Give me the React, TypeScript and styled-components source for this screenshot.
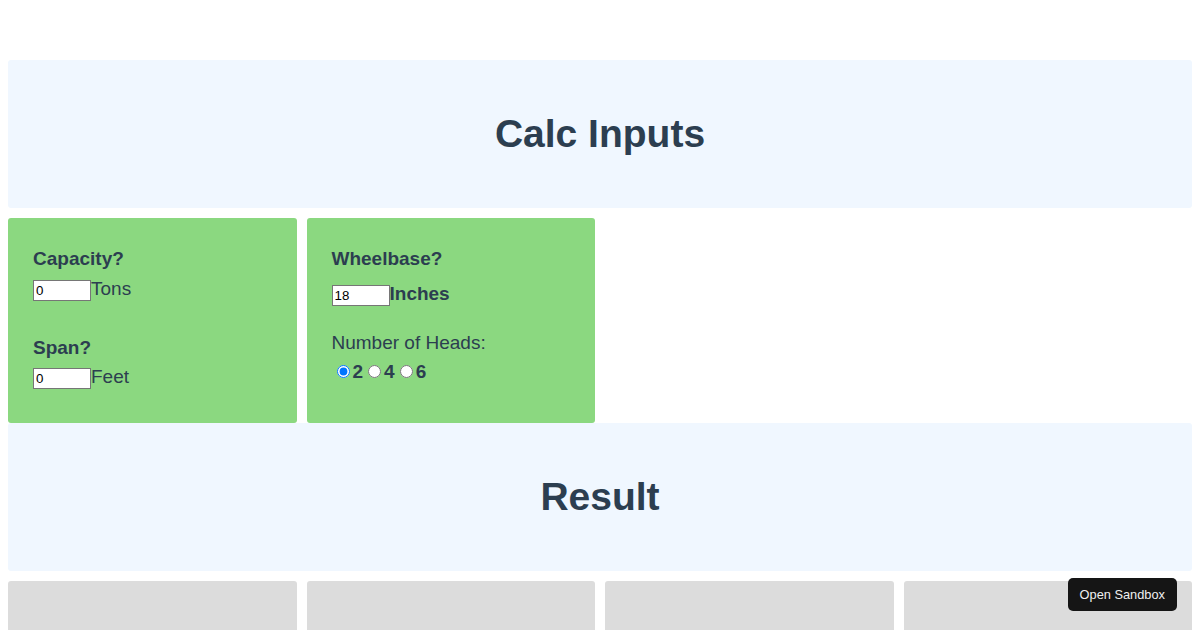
import React, { useState } from 'react';
import styled, { createGlobalStyle } from 'styled-components';

const GlobalStyle = createGlobalStyle`
  body {
    margin: 8px;
    font-family: "Liberation Sans", Arial, Helvetica, sans-serif;
    color: #2c3e50;
    background: #ffffff;
  }
`;

const App = () => {
  const [capacity, setCapacity] = useState('0');
  const [span, setSpan] = useState('0');
  const [wheelbase, setWheelbase] = useState('18');
  const [heads, setHeads] = useState(2);

  return (
    <Page>
      <GlobalStyle />
      <Band>
        <BandTitle>Calc Inputs</BandTitle>
      </Band>
      <CardGrid>
        <InputCard>
          <Question>Capacity?</Question>
          <Field>
            <NumberInput value={capacity} onChange={(e) => setCapacity(e.target.value)} />
            <Unit>Tons</Unit>
          </Field>
          <Question $spaced>Span?</Question>
          <Field>
            <NumberInput value={span} onChange={(e) => setSpan(e.target.value)} />
            <Unit>Feet</Unit>
          </Field>
        </InputCard>
        <InputCard>
          <Question>Wheelbase?</Question>
          <Field $tall>
            <NumberInput value={wheelbase} onChange={(e) => setWheelbase(e.target.value)} />
            <Unit $bold>Inches</Unit>
          </Field>
          <HeadsLabel>Number of Heads:</HeadsLabel>
          <RadioRow>
            {[2, 4, 6].map((n) => (
              <React.Fragment key={n}>
                <input
                  type="radio"
                  name="heads"
                  checked={heads === n}
                  onChange={() => setHeads(n)}
                />
                <RadioText>{n}</RadioText>
              </React.Fragment>
            ))}
          </RadioRow>
        </InputCard>
      </CardGrid>
      <Band>
        <BandTitle>Result</BandTitle>
      </Band>
      <ResultGrid>
        <ResultCard />
        <ResultCard />
        <ResultCard />
        <ResultCard />
      </ResultGrid>
      <SandboxButton>Open Sandbox</SandboxButton>
    </Page>
  );
};

export default App;

const Page = styled.div`
  padding-top: 52px;
`;

const Band = styled.div`
  height: 148px;
  background: #f0f7ff;
  border-radius: 3px;
  display: flex;
  align-items: center;
  justify-content: center;
`;

const BandTitle = styled.h1`
  margin: 0;
  font-size: 39px;
  font-weight: 700;
  color: #2c3e50;
`;

const CardGrid = styled.div`
  display: grid;
  grid-template-columns: repeat(4, 1fr);
  gap: 10px;
  margin-top: 10px;
`;

const InputCard = styled.div`
  background: #8bd880;
  border-radius: 3px;
  height: 205px;
  box-sizing: border-box;
  padding: 30px 25px 0;
`;

const Question = styled.h3<{ $spaced?: boolean }>`
  margin: ${(p) => (p.$spaced ? '36px' : '0')} 0 8px;
  font-size: 19px;
  font-weight: 700;
  line-height: 21.5px;
`;

const Field = styled.div<{ $tall?: boolean }>`
  margin-top: ${(p) => (p.$tall ? '13px' : '0')};
  font-size: 19px;
  line-height: 21px;
`;

const NumberInput = styled.input.attrs({ type: 'text' })`
  width: 52px;
  font-family: "Liberation Sans", Arial, sans-serif;
  font-size: 13.33px;
  padding: 1px 2px;
  border: 1px solid #767676;
  height: 17px;
  margin: 0;
  vertical-align: baseline;
`;

const Unit = styled.span<{ $bold?: boolean }>`
  font-weight: ${(p) => (p.$bold ? 700 : 400)};
`;

const HeadsLabel = styled.div`
  margin-top: 26px;
  font-size: 19px;
  line-height: 21.5px;
`;

const RadioRow = styled.div`
  margin-top: 8px;
  font-size: 19px;
  line-height: 21.5px;
  input {
    margin: 3px 3px 0 5px;
  }
`;

const RadioText = styled.span`
  font-weight: 700;
`;

const ResultGrid = styled(CardGrid)``;

const ResultCard = styled.div`
  background: #dcdcdc;
  border-radius: 3px;
  height: 205px;
`;

const SandboxButton = styled.button`
  position: fixed;
  right: 23px;
  bottom: 19px;
  height: 33px;
  padding: 0 12px;
  background: #151515;
  color: #f0f0f0;
  border: none;
  border-radius: 5px;
  font-family: "Liberation Sans", Arial, sans-serif;
  font-size: 12.8px;
  cursor: pointer;
`;
